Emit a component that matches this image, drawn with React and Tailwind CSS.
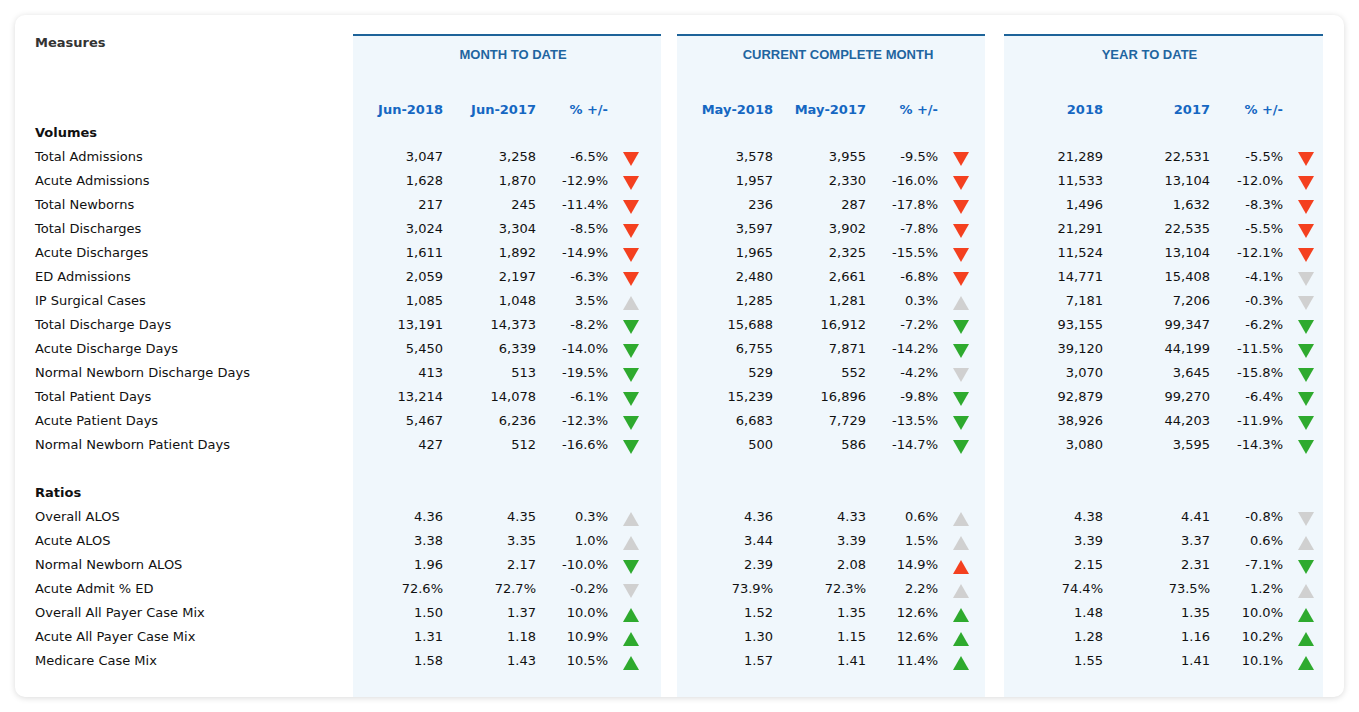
import React from "react";

const volumes = [
  ["Total Admissions", ["3,047", "3,258", "-6.5%", "rd"], ["3,578", "3,955", "-9.5%", "rd"], ["21,289", "22,531", "-5.5%", "rd"]],
  ["Acute Admissions", ["1,628", "1,870", "-12.9%", "rd"], ["1,957", "2,330", "-16.0%", "rd"], ["11,533", "13,104", "-12.0%", "rd"]],
  ["Total Newborns", ["217", "245", "-11.4%", "rd"], ["236", "287", "-17.8%", "rd"], ["1,496", "1,632", "-8.3%", "rd"]],
  ["Total Discharges", ["3,024", "3,304", "-8.5%", "rd"], ["3,597", "3,902", "-7.8%", "rd"], ["21,291", "22,535", "-5.5%", "rd"]],
  ["Acute Discharges", ["1,611", "1,892", "-14.9%", "rd"], ["1,965", "2,325", "-15.5%", "rd"], ["11,524", "13,104", "-12.1%", "rd"]],
  ["ED Admissions", ["2,059", "2,197", "-6.3%", "rd"], ["2,480", "2,661", "-6.8%", "rd"], ["14,771", "15,408", "-4.1%", "xd"]],
  ["IP Surgical Cases", ["1,085", "1,048", "3.5%", "xu"], ["1,285", "1,281", "0.3%", "xu"], ["7,181", "7,206", "-0.3%", "xd"]],
  ["Total Discharge Days", ["13,191", "14,373", "-8.2%", "gd"], ["15,688", "16,912", "-7.2%", "gd"], ["93,155", "99,347", "-6.2%", "gd"]],
  ["Acute Discharge Days", ["5,450", "6,339", "-14.0%", "gd"], ["6,755", "7,871", "-14.2%", "gd"], ["39,120", "44,199", "-11.5%", "gd"]],
  ["Normal Newborn Discharge Days", ["413", "513", "-19.5%", "gd"], ["529", "552", "-4.2%", "xd"], ["3,070", "3,645", "-15.8%", "gd"]],
  ["Total Patient Days", ["13,214", "14,078", "-6.1%", "gd"], ["15,239", "16,896", "-9.8%", "gd"], ["92,879", "99,270", "-6.4%", "gd"]],
  ["Acute Patient Days", ["5,467", "6,236", "-12.3%", "gd"], ["6,683", "7,729", "-13.5%", "gd"], ["38,926", "44,203", "-11.9%", "gd"]],
  ["Normal Newborn Patient Days", ["427", "512", "-16.6%", "gd"], ["500", "586", "-14.7%", "gd"], ["3,080", "3,595", "-14.3%", "gd"]],
];

const ratios = [
  ["Overall ALOS", ["4.36", "4.35", "0.3%", "xu"], ["4.36", "4.33", "0.6%", "xu"], ["4.38", "4.41", "-0.8%", "xd"]],
  ["Acute ALOS", ["3.38", "3.35", "1.0%", "xu"], ["3.44", "3.39", "1.5%", "xu"], ["3.39", "3.37", "0.6%", "xu"]],
  ["Normal Newborn ALOS", ["1.96", "2.17", "-10.0%", "gd"], ["2.39", "2.08", "14.9%", "ru"], ["2.15", "2.31", "-7.1%", "gd"]],
  ["Acute Admit % ED", ["72.6%", "72.7%", "-0.2%", "xd"], ["73.9%", "72.3%", "2.2%", "xu"], ["74.4%", "73.5%", "1.2%", "xu"]],
  ["Overall All Payer Case Mix", ["1.50", "1.37", "10.0%", "gu"], ["1.52", "1.35", "12.6%", "gu"], ["1.48", "1.35", "10.0%", "gu"]],
  ["Acute All Payer Case Mix", ["1.31", "1.18", "10.9%", "gu"], ["1.30", "1.15", "12.6%", "gu"], ["1.28", "1.16", "10.2%", "gu"]],
  ["Medicare Case Mix", ["1.58", "1.43", "10.5%", "gu"], ["1.57", "1.41", "11.4%", "gu"], ["1.55", "1.41", "10.1%", "gu"]],
];

const colors = { r: "#f4401f", g: "#2eaa2e", x: "#d0d0d0" };

const Arrow = ({ code }) => {
  const fill = colors[code[0]];
  const down = code[1] === "d";
  return (
    <svg width="16" height="14" viewBox="0 0 16 14" className="block mt-[3px] ml-[15px]">
      {down ? <polygon points="0,0 16,0 8,14" fill={fill} /> : <polygon points="8,0 16,14 0,14" fill={fill} />}
    </svg>
  );
};

const panels = [
  { title: "MONTH TO DATE", cols: ["Jun-2018", "Jun-2017"], grid: "grid-cols-[90px_93px_72px_1fr]", w: "w-[308px]", title_pad: "pl-[12px]" },
  { title: "CURRENT COMPLETE MONTH", cols: ["May-2018", "May-2017"], grid: "grid-cols-[96px_93px_72px_1fr]", w: "w-[308px]", title_pad: "pl-[14px]" },
  { title: "YEAR TO DATE", cols: ["2018", "2017"], grid: "grid-cols-[99px_107px_73px_1fr]", w: "w-[319px]", title_pad: "pr-[28px]" },
];

const DataRow = ({ grid, vals }) => (
  <div className={`grid ${grid} h-[24px] items-center`}>
    <div className="text-right">{vals[0]}</div>
    <div className="text-right">{vals[1]}</div>
    <div className="text-right">{vals[2]}</div>
    <div>
      <Arrow code={vals[3]} />
    </div>
  </div>
);

const Panel = ({ p, idx }) => (
  <div className={`${p.w} shrink-0 bg-[#f0f7fc] border-t-2 border-[#1d6399] pb-[24px] text-[13px] text-[#111]`}>
    <div
      className={`mt-[11px] leading-[16px] text-center ${p.title_pad} text-[13px] font-bold text-[#1f65a0]`}
      style={{ fontFamily: '"Liberation Sans", Arial, sans-serif' }}
    >
      {p.title}
    </div>
    <div className={`grid ${p.grid} mt-[39px] mb-[3px] leading-[16px] font-bold text-[#1567c2]`}>
      <div className="text-right">{p.cols[0]}</div>
      <div className="text-right">{p.cols[1]}</div>
      <div className="text-right">% +/-</div>
      <div />
    </div>
    <div className="h-[24px]" />
    {volumes.map((r) => (
      <DataRow key={r[0]} grid={p.grid} vals={r[idx + 1]} />
    ))}
    <div className="h-[48px]" />
    {ratios.map((r) => (
      <DataRow key={r[0]} grid={p.grid} vals={r[idx + 1]} />
    ))}
  </div>
);

export default function App() {
  return (
    <div className="min-h-screen bg-white p-[15px]" style={{ fontFamily: '"DejaVu Sans", Verdana, sans-serif' }}>
      <div className="w-[1329px] flex bg-white rounded-[10px] shadow-[0_1px_6px_rgba(0,0,0,0.15)] pt-[19px] pr-[21px] overflow-hidden">
        <div className="w-[338px] shrink-0 pl-[20px] text-[13px] text-[#111]">
          <div className="leading-[17px] font-bold text-[#333] text-[13px]">Measures</div>
          <div className="h-[70px]" />
          <div className="h-[24px] leading-[24px] font-bold">Volumes</div>
          {volumes.map((r) => (
            <div key={r[0]} className="h-[24px] leading-[24px]">{r[0]}</div>
          ))}
          <div className="h-[24px]" />
          <div className="h-[24px] leading-[24px] font-bold">Ratios</div>
          {ratios.map((r) => (
            <div key={r[0]} className="h-[24px] leading-[24px]">{r[0]}</div>
          ))}
        </div>
        <Panel p={panels[0]} idx={0} />
        <div className="w-[16px] shrink-0" />
        <Panel p={panels[1]} idx={1} />
        <div className="w-[19px] shrink-0" />
        <Panel p={panels[2]} idx={2} />
      </div>
    </div>
  );
}
